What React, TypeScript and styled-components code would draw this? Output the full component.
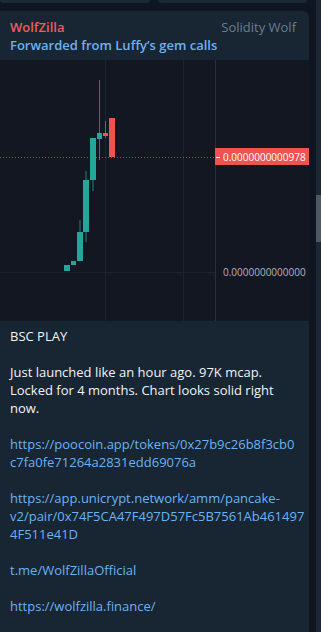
import styled, { createGlobalStyle } from "styled-components";

const GlobalStyle = createGlobalStyle`
  body {
    margin: 0;
    background: #0e1621;
    font-family: "Open Sans", "Noto Sans", sans-serif;
  }
`;

const Page = styled.div`
  display: flex;
  width: 321px;
  height: 632px;
  overflow: hidden;
  background: #0e1621;
`;

const Feed = styled.div`
  width: 316px;
  display: flex;
  flex-direction: column;
  & > * {
    flex-shrink: 0;
  }
`;

const KeyboardRow = styled.div`
  display: flex;
  gap: 8px;
  height: 3px;
  padding-right: 9px;
`;

const KeyboardButton = styled.div`
  flex: 1;
  background: #1b2835;
  border-radius: 0 0 4px 4px;
`;

const Message = styled.div`
  margin-top: 8px;
  width: 309px;
  background: #182533;
  border-radius: 0 6px 0 0;
  font-size: 13px;
  line-height: 18px;
`;

const Header = styled.div`
  padding: 7px 13px 6px 10px;
`;

const NameRow = styled.div`
  display: flex;
  justify-content: space-between;
`;

const Sender = styled.span`
  color: #ee5c5c;
  font-weight: 600;
`;

const Signature = styled.span`
  color: #6c7d8d;
`;

const Forwarded = styled.div`
  color: #6ab3f3;
  font-weight: 600;
`;

const ChartBox = styled.div`
  height: 261px;
  background: #131722;
  svg {
    display: block;
  }
`;

const Body = styled.div`
  padding: 6px 10px 20px 10px;
  color: #f2f4f6;
`;

const Para = styled.p`
  margin: 0 0 18px;
`;

const Link = styled.a`
  color: #6ab3f3;
  text-decoration: none;
  white-space: nowrap;
`;

const Scrollbar = styled.div`
  width: 5px;
  background: #1d2733;
  display: flex;
  flex-direction: column;
`;

const Thumb = styled.div`
  margin-top: 195px;
  height: 47px;
  background: #4e5863;
`;

type Candle = { x: number; w: number; top: number; bottom: number; wt?: number; wb?: number; up: boolean };

const candles: Candle[] = [
  { x: 64, w: 6, top: 205, bottom: 211, up: true },
  { x: 71, w: 5, top: 201, bottom: 205, up: true },
  { x: 77, w: 6, top: 172, bottom: 201, wt: 160, up: true },
  { x: 83, w: 6, top: 120, bottom: 172, wt: 111, wb: 182, up: true },
  { x: 90, w: 6, top: 78, bottom: 120, wb: 131, up: true },
  { x: 97, w: 5, top: 73, bottom: 79, wt: 20, wb: 100, up: true },
  { x: 103, w: 5, top: 73, bottom: 76, wt: 61, wb: 78, up: false },
  { x: 109, w: 6, top: 58, bottom: 97, up: false },
];

const Chart = () => (
  <ChartBox>
    <svg width="309" height="261" viewBox="0 0 309 261">
      <line x1="105.5" y1="0" x2="105.5" y2="261" stroke="#1f2330" />
      <line x1="183.5" y1="0" x2="183.5" y2="261" stroke="#1f2330" />
      <line x1="0" y1="212.5" x2="215" y2="212.5" stroke="#1f2330" />
      <line x1="215.5" y1="0" x2="215.5" y2="261" stroke="#2a2e39" />
      {candles.map((c, i) => {
        const color = c.up ? "#26a69a" : "#ef5350";
        const cx = c.x + c.w / 2;
        return (
          <g key={i}>
            {(c.wt !== undefined || c.wb !== undefined) && (
              <line
                x1={cx}
                x2={cx}
                y1={c.wt ?? c.top}
                y2={c.wb ?? c.bottom}
                stroke={color}
                strokeOpacity={0.75}
                strokeWidth={1}
              />
            )}
            <rect x={c.x} y={c.top} width={c.w} height={c.bottom - c.top} fill={color} />
          </g>
        );
      })}
      <line x1="0" y1="97.5" x2="215" y2="97.5" stroke="#ef5350" strokeOpacity={0.7} strokeDasharray="1 2" />
      <rect x="215" y="88" width="94" height="17" fill="#ef5350" />
      <line x1="216" y1="97.5" x2="220" y2="97.5" stroke="#ffffff" />
      <text x="223" y="100.5" fill="#ffffff" fontSize="10" fontFamily="'Open Sans', sans-serif">
        0.0000000000978
      </text>
      <text x="223" y="216" fill="#b2b5be" fontSize="10" fontFamily="'Open Sans', sans-serif">
        0.0000000000000
      </text>
    </svg>
  </ChartBox>
);

export default function App() {
  return (
    <Page>
      <GlobalStyle />
      <Feed>
        <KeyboardRow>
          <KeyboardButton />
          <KeyboardButton />
        </KeyboardRow>
        <Message>
          <Header>
            <NameRow>
              <Sender>WolfZilla</Sender>
              <Signature>Solidity Wolf</Signature>
            </NameRow>
            <Forwarded>Forwarded from Luffy’s gem calls</Forwarded>
          </Header>
          <Chart />
          <Body>
            <Para>BSC PLAY</Para>
            <Para>Just launched like an hour ago. 97K mcap. Locked for 4 months. Chart looks solid right now.</Para>
            <Para>
              <Link>
                https://poocoin.app/tokens/0x27b9c26b8f3cb0
                <br />
                c7fa0fe71264a2831edd69076a
              </Link>
            </Para>
            <Para>
              <Link>
                https://app.unicrypt.network/amm/pancake-
                <br />
                v2/pair/0x74F5CA47F497D57Fc5B7561Ab461497
                <br />
                4F511e41D
              </Link>
            </Para>
            <Para>
              <Link>t.me/WolfZillaOfficial</Link>
            </Para>
            <Para>
              <Link>https://wolfzilla.finance/</Link>
            </Para>
          </Body>
        </Message>
      </Feed>
      <Scrollbar>
        <Thumb />
      </Scrollbar>
    </Page>
  );
}
